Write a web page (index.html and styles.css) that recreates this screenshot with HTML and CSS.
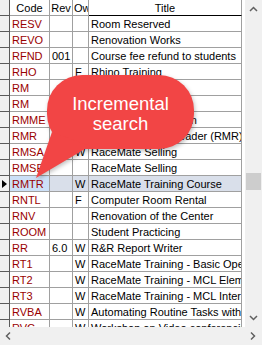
FILE: index.html
```html
<!DOCTYPE html>
<html lang="en">
<head>
    <meta charset="UTF-8">
    <title>Courses grid</title>
    <link rel="stylesheet" href="styles.css">
</head>
<body>
    <div class="grid">
        <div class="grid-main">
            <div class="grid-body">
                <div class="row head">
                    <div class="cell ind"></div>
                    <div class="cell code">Code</div>
                    <div class="cell rev">Rev</div>
                    <div class="cell ow">Ow</div>
                    <div class="cell title">Title</div>
                </div>
                <div class="row"><div class="cell ind"></div><div class="cell code">RESV</div><div class="cell rev"></div><div class="cell ow"></div><div class="cell title">Room Reserved</div></div>
                <div class="row"><div class="cell ind"></div><div class="cell code">REVO</div><div class="cell rev"></div><div class="cell ow"></div><div class="cell title">Renovation Works</div></div>
                <div class="row"><div class="cell ind"></div><div class="cell code">RFND</div><div class="cell rev">001</div><div class="cell ow"></div><div class="cell title">Course fee refund to students</div></div>
                <div class="row"><div class="cell ind"></div><div class="cell code">RHO</div><div class="cell rev"></div><div class="cell ow">F</div><div class="cell title">Rhino Training</div></div>
                <div class="row"><div class="cell ind"></div><div class="cell code">RM</div><div class="cell rev"></div><div class="cell ow">W</div><div class="cell title">RaceMate</div></div>
                <div class="row"><div class="cell ind"></div><div class="cell code">RM</div><div class="cell rev"></div><div class="cell ow">W</div><div class="cell title">RaceMate</div></div>
                <div class="row"><div class="cell ind"></div><div class="cell code">RMME</div><div class="cell rev"></div><div class="cell ow">W</div><div class="cell title">RaceMate Installation</div></div>
                <div class="row"><div class="cell ind"></div><div class="cell code">RMR</div><div class="cell rev"></div><div class="cell ow">W</div><div class="cell title">RaceMate Card Reader (RMR)</div></div>
                <div class="row"><div class="cell ind"></div><div class="cell code">RMSA</div><div class="cell rev"></div><div class="cell ow">W</div><div class="cell title">RaceMate Selling</div></div>
                <div class="row"><div class="cell ind"></div><div class="cell code">RMSE</div><div class="cell rev"></div><div class="cell ow"></div><div class="cell title">RaceMate Selling</div></div>
                <div class="row selected"><div class="cell ind"><span class="marker"></span></div><div class="cell code">RMTR</div><div class="cell rev"></div><div class="cell ow">W</div><div class="cell title">RaceMate Training Course</div></div>
                <div class="row"><div class="cell ind"></div><div class="cell code">RNTL</div><div class="cell rev"></div><div class="cell ow">F</div><div class="cell title">Computer Room Rental</div></div>
                <div class="row"><div class="cell ind"></div><div class="cell code">RNV</div><div class="cell rev"></div><div class="cell ow"></div><div class="cell title">Renovation of the Center</div></div>
                <div class="row"><div class="cell ind"></div><div class="cell code">ROOM</div><div class="cell rev"></div><div class="cell ow"></div><div class="cell title">Student Practicing</div></div>
                <div class="row"><div class="cell ind"></div><div class="cell code">RR</div><div class="cell rev">6.0</div><div class="cell ow">W</div><div class="cell title">R&amp;R Report Writer</div></div>
                <div class="row"><div class="cell ind"></div><div class="cell code">RT1</div><div class="cell rev"></div><div class="cell ow">W</div><div class="cell title">RaceMate Training - Basic Operation</div></div>
                <div class="row"><div class="cell ind"></div><div class="cell code">RT2</div><div class="cell rev"></div><div class="cell ow">W</div><div class="cell title">RaceMate Training - MCL Elements</div></div>
                <div class="row"><div class="cell ind"></div><div class="cell code">RT3</div><div class="cell rev"></div><div class="cell ow">W</div><div class="cell title">RaceMate Training - MCL Internals</div></div>
                <div class="row"><div class="cell ind"></div><div class="cell code">RVBA</div><div class="cell rev"></div><div class="cell ow">W</div><div class="cell title">Automating Routine Tasks with VBA</div></div>
                <div class="row"><div class="cell ind"></div><div class="cell code">RVC</div><div class="cell rev"></div><div class="cell ow">W</div><div class="cell title">Workshop on Video conferencing</div></div>
            </div>
            <div class="vscroll">
                <svg class="arrow" width="17" height="17" viewBox="0 0 17 17"><polyline points="5,11 8.5,7.5 12,11" fill="none" stroke="#606060" stroke-width="1.5"/></svg>
                <div class="track"><div class="thumb"></div></div>
                <svg class="arrow" width="17" height="17" viewBox="0 0 17 17"><polyline points="5,6 8.5,9.5 12,6" fill="none" stroke="#606060" stroke-width="1.5"/></svg>
            </div>
        </div>
        <div class="hscroll">
            <svg class="arrow" width="17" height="18" viewBox="0 0 17 18"><polyline points="10,5.5 6.5,9 10,12.5" fill="none" stroke="#606060" stroke-width="1.5"/></svg>
            <svg class="arrow" width="17" height="18" viewBox="0 0 17 18"><polyline points="7,5.5 10.5,9 7,12.5" fill="none" stroke="#606060" stroke-width="1.5"/></svg>
        </div>

        <!-- callout over the grid -->
        <div class="callout">
            <svg width="262" height="345" viewBox="0 0 262 345">
                <g fill="#f24545">
                    <rect x="47" y="75" width="147" height="74" rx="35"/>
                    <polygon points="52,132 90,146 36,178"/>
                </g>
            </svg>
            <div class="callout-text">Incremental<br>search</div>
        </div>
    </div>
</body>
</html>
```

FILE: styles.css
```css
* {
    margin: 0;
    padding: 0;
    box-sizing: border-box;
}

body {
    font-family: 'Liberation Sans', Arial, sans-serif;
    font-size: 11px;
    background: #ffffff;
    color: #000000;
}

.grid {
    position: relative;
    width: 262px;
    height: 345px;
    display: flex;
    flex-direction: column;
    overflow: hidden;
}

.grid-main {
    display: flex;
    height: 327px;
}

.grid-body {
    width: 245px;
    height: 327px;
    overflow: hidden;
    background: #ffffff;
}

.row {
    display: flex;
    height: 16px;
}

.cell {
    height: 16px;
    padding: 1px 0 0 2px;
    line-height: 14px;
    border-right: 1px solid #a0a0a0;
    border-bottom: 1px solid #a0a0a0;
    white-space: nowrap;
    overflow: hidden;
}

.ind {
    width: 10px;
    padding: 0;
    background: #f0f0f0;
    border-right-color: #5a5a5a;
    border-bottom-color: #5a5a5a;
    position: relative;
}

.code {
    width: 40px;
    color: #990000;
}

.rev {
    width: 23px;
}

.ow {
    width: 16px;
}

.title {
    width: 153px;
}

/* header */
.head .cell {
    color: #000000;
    text-align: center;
    padding: 2px 0 0 0;
    line-height: 13px;
}

.head .ow {
    text-align: left;
    padding-left: 1px;
}

.head .title {
    border-bottom-color: #000000;
}

/* current record */
.selected .cell {
    background: #d9dfea;
}

.selected .code {
    background: #cce0f7;
}

.selected .ind {
    background: #f0f0f0;
}

.marker {
    position: absolute;
    left: 2px;
    top: 4px;
    width: 0;
    height: 0;
    border-top: 4px solid transparent;
    border-bottom: 4px solid transparent;
    border-left: 5px solid #000000;
}

/* scrollbars */
.vscroll {
    width: 17px;
    background: #f0f0f0;
    display: flex;
    flex-direction: column;
}

.arrow {
    display: block;
    flex: none;
}

.track {
    flex: 1;
    padding: 156px 1px 0 1px;
}

.thumb {
    height: 17px;
    background: #cdcdcd;
}

.hscroll {
    height: 18px;
    background: #f0f0f0;
    display: flex;
    justify-content: space-between;
    padding-right: 1px;
}

/* callout */
.callout {
    position: absolute;
    left: 0;
    top: 0;
    width: 262px;
    height: 345px;
    pointer-events: none;
}

.callout svg {
    display: block;
    filter: drop-shadow(1px 2px 2px rgba(0, 0, 0, 0.25));
}

.callout-text {
    position: absolute;
    left: 47px;
    top: 94px;
    width: 147px;
    text-align: center;
    color: #ffffff;
    font-size: 18.5px;
    line-height: 20px;
}
```
